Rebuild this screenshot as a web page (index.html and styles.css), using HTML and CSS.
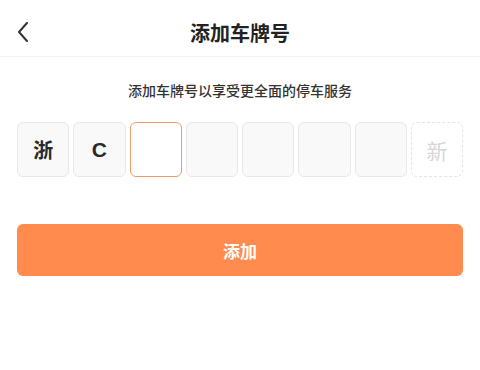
FILE: index.html
```html
<!DOCTYPE html>
<html lang="zh-CN">
<head>
    <meta charset="UTF-8">
    <title>添加车牌号</title>
    <link rel="stylesheet" href="styles.css">
</head>
<body>
    <div class="header">
        <span class="back">
            <svg width="12" height="20" viewBox="0 0 12 20">
                <path d="M10 1 L2 10 L10 19" fill="none" stroke="#333" stroke-width="2" stroke-linecap="round" stroke-linejoin="round"/>
            </svg>
        </span>
        <h1 class="title">添加车牌号</h1>
    </div>
    <div class="content">
        <p class="tip">添加车牌号以享受更全面的停车服务</p>
        <div class="plate">
            <div class="cell">浙</div>
            <div class="cell letter">C</div>
            <div class="cell active"></div>
            <div class="cell"></div>
            <div class="cell"></div>
            <div class="cell"></div>
            <div class="cell"></div>
            <div class="cell new">新</div>
        </div>
        <button class="addBtn">添加</button>
    </div>
</body>
</html>
```

FILE: styles.css
```css
body {
  margin: 0;
  background: #ffffff;
  color: #222222;
  font-family: "Noto Sans CJK SC", "Noto Sans", sans-serif;
}

/* Header */
.header {
  position: relative;
  height: 56px;
  display: flex;
  align-items: center;
  justify-content: center;
  border-bottom: 1px solid #f2f2f2;
}

.back {
  position: absolute;
  left: 17px;
  top: 22px;
  display: flex;
}

.title {
  margin: 0;
  font-size: 20px;
  font-weight: 700;
  color: #222222;
  padding-top: 8px;
}

/* Content */
.content {
  padding: 0 17px;
}

.tip {
  margin: 21px 0 0;
  text-align: center;
  font-size: 14px;
  font-weight: 500;
  color: #333333;
  line-height: 24px;
}

.plate {
  display: flex;
  gap: 4px;
  margin-top: 20px;
}

.cell {
  flex: 1;
  height: 55px;
  box-sizing: border-box;
  border: 1px solid #e8e8e8;
  border-radius: 6px;
  background: #f9f9f9;
  display: flex;
  align-items: center;
  justify-content: center;
  font-size: 20px;
  font-weight: 700;
  color: #2a2a2a;
}

.letter {
  font-family: "Liberation Sans", Arial, sans-serif;
  font-size: 21px;
}

.cell.active {
  background: #ffffff;
  border: 1.5px solid #f0996a;
}

.cell.new {
  background: #ffffff;
  border: 1.5px dashed #e4e4e4;
  color: #d6d6d6;
  font-weight: 400;
  font-size: 21px;
}

.addBtn {
  display: block;
  width: 100%;
  height: 52px;
  margin-top: 47px;
  border: none;
  border-radius: 6px;
  background: #ff8b4f;
  color: #ffffff;
  font: inherit;
  font-size: 17px;
  font-weight: 700;
}
```
